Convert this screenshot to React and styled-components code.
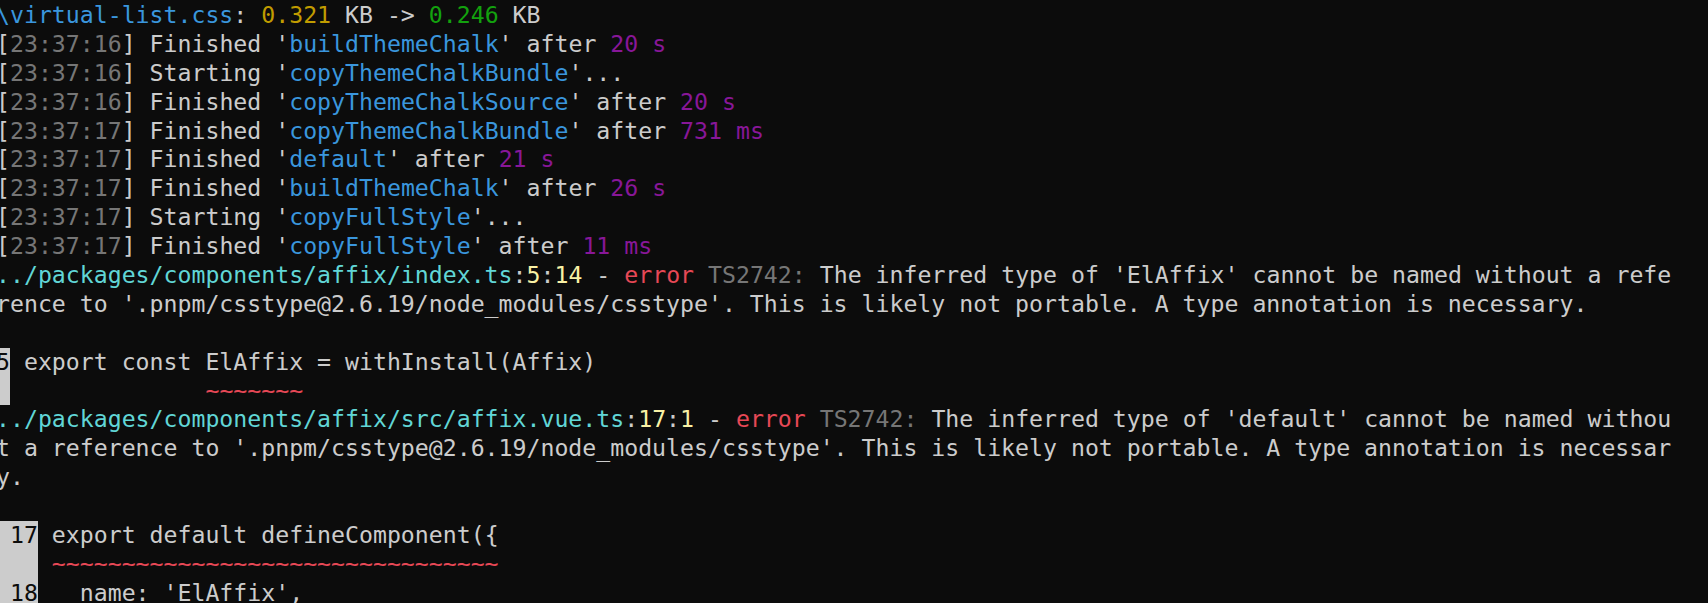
import React from 'react';
import styled, { createGlobalStyle } from 'styled-components';

const colors = {
  fg: '#cccccc',
  dim: '#767676',
  blue: '#3a96dd',
  purple: '#881798',
  gold: '#c19c00',
  green: '#13a10e',
  cyan: '#61d6d6',
  yellow: '#f9f1a5',
  red: '#e74856',
};

const GlobalStyle = createGlobalStyle`
  html, body {
    margin: 0;
    padding: 0;
    background: #0c0c0c;
  }
`;

const Screen = styled.div`
  height: 100vh;
  overflow: hidden;
  background: #0c0c0c;
`;

const Output = styled.div`
  margin-left: -4px;
  padding-top: 1px;
  font-family: 'DejaVu Sans Mono', 'Liberation Mono', monospace;
  font-size: 23.2px;
  line-height: 28.9px;
  color: ${colors.fg};
  white-space: pre;
`;

const Row = styled.div`
  height: 28.9px;
`;

const Tone = styled.span`
  color: ${(props) => colors[props.$c] || colors.fg};
`;

const Gutter = styled.span`
  display: inline-block;
  vertical-align: top;
  height: 28.9px;
  background: #cccccc;
  color: #0c0c0c;
`;

const Squiggle = styled.span`
  color: ${colors.red};
`;

const Stamp = ({ time }) => (
  <>
    [<Tone $c="dim">{time}</Tone>]{' '}
  </>
);

const TaskLine = ({ time, verb, task, after, unit }) => (
  <Row>
    <Stamp time={time} />
    {verb} '<Tone $c="blue">{task}</Tone>'
    {after ? (
      <>
        {' after '}
        <Tone $c="purple">{after}</Tone>
      </>
    ) : (
      '...'
    )}
  </Row>
);

const ErrorHead = ({ file, line, col, rest }) => (
  <Row>
    <Tone $c="cyan">{file}</Tone>:<Tone $c="yellow">{line}</Tone>:
    <Tone $c="yellow">{col}</Tone>
    {' - '}
    <Tone $c="red">error</Tone> <Tone $c="dim">TS2742: </Tone>
    {rest}
  </Row>
);

const tasks = [
  ['23:37:16', 'Finished', 'buildThemeChalk', '20 s'],
  ['23:37:16', 'Starting', 'copyThemeChalkBundle', null],
  ['23:37:16', 'Finished', 'copyThemeChalkSource', '20 s'],
  ['23:37:17', 'Finished', 'copyThemeChalkBundle', '731 ms'],
  ['23:37:17', 'Finished', 'default', '21 s'],
  ['23:37:17', 'Finished', 'buildThemeChalk', '26 s'],
  ['23:37:17', 'Starting', 'copyFullStyle', null],
  ['23:37:17', 'Finished', 'copyFullStyle', '11 ms'],
];

const App = () => {
  return (
    <Screen>
      <GlobalStyle />
      <Output>
        <Row>
          <Tone $c="blue">\virtual-list.css</Tone>: <Tone $c="gold">0.321</Tone>
          {' KB -> '}
          <Tone $c="green">0.246</Tone> KB
        </Row>
        {tasks.map(([time, verb, task, after], i) => (
          <TaskLine key={i} time={time} verb={verb} task={task} after={after} />
        ))}
        <ErrorHead
          file="../packages/components/affix/index.ts"
          line="5"
          col="14"
          rest="The inferred type of 'ElAffix' cannot be named without a refe"
        />
        <Row>rence to '.pnpm/csstype@2.6.19/node_modules/csstype'. This is likely not portable. A type annotation is necessary.</Row>
        <Row />
        <Row>
          <Gutter>5</Gutter> export const ElAffix = withInstall(Affix)
        </Row>
        <Row>
          <Gutter> </Gutter>
          {'              '}
          <Squiggle>~~~~~~~</Squiggle>
        </Row>
        <ErrorHead
          file="../packages/components/affix/src/affix.vue.ts"
          line="17"
          col="1"
          rest="The inferred type of 'default' cannot be named withou"
        />
        <Row>t a reference to '.pnpm/csstype@2.6.19/node_modules/csstype'. This is likely not portable. A type annotation is necessar</Row>
        <Row>y.</Row>
        <Row />
        <Row>
          <Gutter> 17</Gutter> export default defineComponent({'{'}
        </Row>
        <Row>
          <Gutter>{'   '}</Gutter> <Squiggle>{'~'.repeat(32)}</Squiggle>
        </Row>
        <Row>
          <Gutter> 18</Gutter>{"   name: 'ElAffix',"}
        </Row>
      </Output>
    </Screen>
  );
};

export default App;
